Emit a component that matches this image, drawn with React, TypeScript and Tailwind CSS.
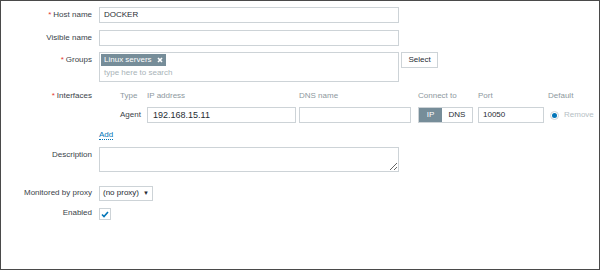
import React from "react";

const FONT = { fontFamily: '"Liberation Sans", Arial, sans-serif' };

const Label = ({ text, required }: { text: string; required?: boolean }) => (
    <div className="w-[91px] shrink-0 text-right leading-[16px] text-[#3a4349]">
        {required && <span className="text-[#e33734] mr-[2px]">*</span>}
        {text}
    </div>
);

const inputCls = "h-[16px] border border-[#cdd3d7] bg-white px-[4px] leading-[14px] text-[#1f2c33]";

export default function App() {
    return (
        <div className="w-[600px] h-[270px] border border-[#4a4a4a] bg-white text-[8px] pt-[6px] overflow-hidden" style={FONT}>
            {/* Host name */}
            <div className="flex">
                <Label text="Host name" required />
                <div className={`${inputCls} ml-[7px] w-[300px]`}>DOCKER</div>
            </div>

            {/* Visible name */}
            <div className="flex mt-[7px]">
                <Label text="Visible name" />
                <div className={`${inputCls} ml-[7px] w-[300px]`} />
            </div>

            {/* Groups */}
            <div className="flex mt-[6px]">
                <Label text="Groups" required />
                <div className="ml-[7px] w-[300px] h-[30px] border border-[#cdd3d7] px-[1px] pt-[1px]">
                    <span className="inline-flex items-center h-[12px] bg-[#768d99] text-white px-[3px] gap-[5px] leading-[12px]">
                        Linux servers
                        <svg width="6" height="6" viewBox="0 0 6 6"><path d="M1 1L5 5M5 1L1 5" stroke="white" strokeWidth="1.6" /></svg>
                    </span>
                    <div className="text-[#a9b3b8] pl-[3px] leading-[14px]">type here to search</div>
                </div>
                <div className="ml-[2px] w-[37px] h-[16px] border border-[#cdd3d7] text-center leading-[14px] text-[#1f2c33]">Select</div>
            </div>

            {/* Interfaces */}
            <div className="flex mt-[6px]">
                <Label text="Interfaces" required />
                <div className="ml-[28px]">
                    <div className="flex leading-[16px] text-[#8d989e]">
                        <div className="w-[27px]">Type</div>
                        <div className="w-[152px]">IP address</div>
                        <div className="w-[119px]">DNS name</div>
                        <div className="w-[60px]">Connect to</div>
                        <div className="w-[70px]">Port</div>
                        <div>Default</div>
                    </div>
                    <div className="flex items-center mt-[3px]">
                        <div className="w-[27px] text-[#3a4349]">Agent</div>
                        <div className={`${inputCls} w-[149px] text-[9px] pl-[5px]`}>192.168.15.11</div>
                        <div className={`${inputCls} ml-[3px] w-[112px]`} />
                        <div className="ml-[7px] flex h-[16px] w-[55px] border border-[#cdd3d7]">
                            <div className="w-[23px] bg-[#768d99] text-white text-center leading-[14px]">IP</div>
                            <div className="flex-1 text-center leading-[14px] text-[#1f2c33]">DNS</div>
                        </div>
                        <div className={`${inputCls} ml-[5px] w-[66px]`}>10050</div>
                        <div className="ml-[6px] w-[9px] h-[9px] rounded-full border border-[#cdd3d7] flex items-center justify-center">
                            <div className="w-[5px] h-[5px] rounded-full bg-[#0275b8]" />
                        </div>
                        <div className="ml-[5px] text-[#b5c0c5]">Remove</div>
                    </div>
                </div>
            </div>

            {/* Add */}
            <div className="flex mt-[4px]">
                <div className="w-[91px]" />
                <div className="ml-[7px] leading-[16px]">
                    <span className="text-[#0275b8] border-b border-dotted border-[#0275b8]">Add</span>
                </div>
            </div>

            {/* Description */}
            <div className="flex mt-[4px]">
                <Label text="Description" />
                <textarea className="ml-[7px] w-[300px] h-[25px] border border-[#cdd3d7] resize-y outline-none" />
            </div>

            {/* Monitored by proxy */}
            <div className="flex mt-[13px] items-center">
                <Label text="Monitored by proxy" />
                <div className="ml-[7px] h-[15px] w-[54px] border border-[#cdd3d7] flex items-center px-[3px] text-[#1f2c33]">
                    <span>(no proxy)</span>
                    <span className="ml-auto text-[6px]">▼</span>
                </div>
            </div>

            {/* Enabled */}
            <div className="flex mt-[4px]">
                <Label text="Enabled" />
                <div className="ml-[7px] mt-[3px] w-[12px] h-[12px] border border-[#cdd3d7] flex items-center justify-center">
                    <svg width="8" height="7" viewBox="0 0 8 7"><path d="M1 3.5L3 5.5L7 1" fill="none" stroke="#0275b8" strokeWidth="1.6" /></svg>
                </div>
            </div>
        </div>
    );
}
